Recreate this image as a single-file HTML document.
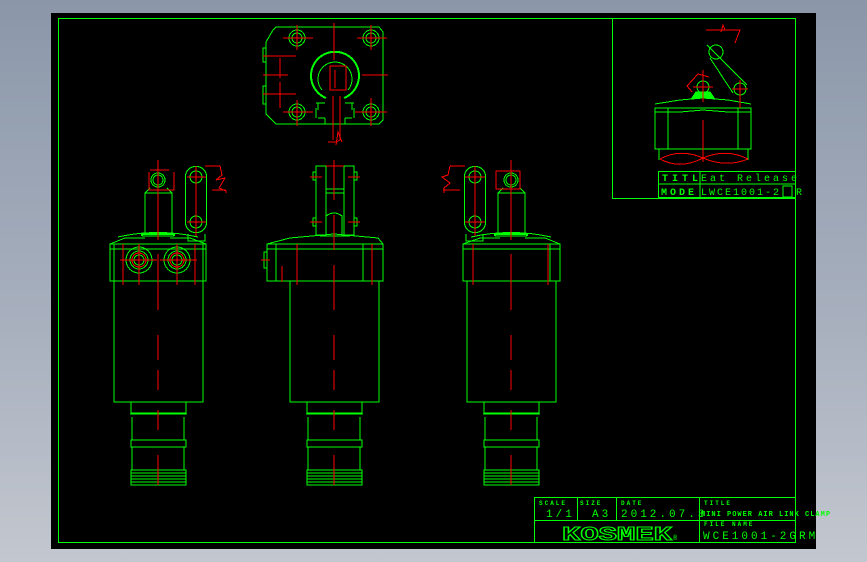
<!DOCTYPE html>
<html><head><meta charset="utf-8"><style>
html,body{margin:0;padding:0;width:867px;height:562px;overflow:hidden;background:linear-gradient(180deg,#8b97a9 0%,#a9b1bf 60%,#c3c7cf 100%);}
svg{position:absolute;left:0;top:0}
text{font-family:"Liberation Mono",monospace;fill:#00ff00}
</style></head><body>
<svg width="867" height="562" viewBox="0 0 867 562" xmlns="http://www.w3.org/2000/svg" shape-rendering="crispEdges">
<defs>
<g id="lower" fill="none" stroke="#00ff00" stroke-width="1">
  <rect x="-44" y="281" width="89" height="121"/>
  <path d="M-27 402V413H28V402M-28 414H29M-26 417V440H26V417M-27 440H28V447H-27ZM-26 447V470H26V447M-27 470H28V485H-27ZM-27 473H28M-27 476H28M-27 479H28M-27 482H28"/>
  <path d="M0 290V310M0 335V360M0 370V390M0 410V430M0 455V485" stroke="#ff0000"/>
</g>
<g id="rodtop" fill="none" stroke="#00ff00">
  <rect x="-13" y="193" width="27" height="41"/>
  <path d="M-16 236H16M-40 237Q0 228 40 237" />
  <path d="M-16 236V234H16V236" stroke-width="2"/>
  <circle cx="0" cy="180" r="7"/><circle cx="0" cy="180" r="5"/>
  <path d="M-13 193L-8 188M14 193L9 188"/>
</g>
</defs>
<rect x="51" y="13" width="765" height="536" fill="#000"/>
<rect x="58.5" y="18.5" width="737" height="524" fill="none" stroke="#00ff00"/>

<!-- top plan view -->
<g fill="none" stroke="#00ff00">
  <path d="M276 27H379L383 32V120L379 124H276L266 114V42L273 30Z"/>
  <path d="M266 48H263V62H266M266 86H263V104H266"/>
  <circle cx="297" cy="38" r="8"/><circle cx="297" cy="38" r="5"/>
  <circle cx="371" cy="38" r="8"/><circle cx="371" cy="38" r="5"/>
  <circle cx="297" cy="112" r="8"/><circle cx="297" cy="112" r="5"/>
  <circle cx="371" cy="112" r="8"/><circle cx="371" cy="112" r="5"/>
  <path d="M326 98A24 24 0 1 1 344 98" stroke-width="2"/>
  <path d="M322 90A17 17 0 1 1 348 90"/>
  <path d="M318 103V110M352 103V110M316 103H325M345 103H354M318 118H325M345 118H352M316 108V118M354 108V118M325 118V124H345V118"/>
</g>
<g fill="none" stroke="#ff0000">
  <path d="M334 23V60M280 58V78M263 56H296M280 82V108M263 94H296M263 75H288M362 75H388M283 38H313M357 38H387M297 25V50M371 25V50M283 112H313M355 112H387M297 100V126M371 98V126M330 66H346V90H330ZM335 70V88M333 96V140M340 96V140L336 142H328M342 142L338 132L336 145"/>
</g>

<!-- left view -->
<use href="#lower" x="158"/>
<g fill="none" stroke="#00ff00">
  <rect x="110" y="244" width="96" height="37"/>
  <path d="M110 244L125 238H145M170 238H190L206 244M110 249H206M114 244V281M203 244V281"/>
  <circle cx="139" cy="260" r="13"/><circle cx="139" cy="260" r="9"/><circle cx="139" cy="260" r="5"/>
  <circle cx="177" cy="260" r="13"/><circle cx="177" cy="260" r="9"/><circle cx="177" cy="260" r="5"/>
  <rect x="185.5" y="166.5" width="21" height="66" rx="10"/>
  <circle cx="196" cy="177" r="6"/><circle cx="196" cy="222" r="6"/>
  <path d="M188 234V241H205V234"/>
</g>
<use href="#rodtop" x="158"/>
<g fill="none" stroke="#ff0000">
  <path d="M158 160V240M158 254V290M120 260H157M160 260H197M139 244V285M177 244V285M196 166V236M187 177H206M187 222H206M123 244V285M195 244V285M150 170H169M149 172V190H174V172M205 166H220L222 175L216 180L225 178L219 188L226 191V193M212 190H226"/>
  <circle cx="139" cy="260" r="7"/><circle cx="177" cy="260" r="7"/>
</g>

<!-- middle view -->
<use href="#lower" x="334"/>
<g fill="none" stroke="#00ff00">
  <rect x="267" y="244" width="116" height="37"/>
  <path d="M267 244L290 238L334 234L378 238L383 244M267 249H383M276 244V281M363 244V281M267 252H264V268H267"/>
  <rect x="316" y="166" width="10" height="69"/><rect x="344" y="166" width="10" height="69"/>
  <rect x="313" y="172" width="3" height="8"/><rect x="354" y="172" width="3" height="8"/>
  <rect x="313" y="218" width="3" height="8"/><rect x="354" y="218" width="3" height="8"/>
  <path d="M326 189H344M326 193H344M326 236V216Q334 210 342 216V236M320 236H350"/>
</g>
<g fill="none" stroke="#ff0000">
  <path d="M334 160V200M334 215V250M334 265V290M310 177H322M348 177H360M310 222H322M348 222H360M326 166H344M297 244V285M372 244V285M282 266V282M261 260H270"/>
</g>

<!-- right view -->
<use href="#lower" x="511"/>
<g fill="none" stroke="#00ff00">
  <rect x="463" y="244" width="97" height="37"/>
  <path d="M463 244L480 238H500M525 238H545L560 244M463 249H560M473 244V281M550 244V281"/>
  <rect x="464.5" y="166.5" width="21" height="66" rx="10"/>
  <circle cx="475" cy="177" r="6"/><circle cx="475" cy="222" r="6"/>
  <path d="M466 234V241H483V234"/>
</g>
<use href="#rodtop" x="511"/>
<g fill="none" stroke="#ff0000">
  <path d="M511 160V240M511 254V290M475 166V236M465 177H485M465 222H485M473 244V285M548 244V285M496 171H520V189H496ZM450 166H465M450 166L448 175L442 177L450 183L444 188V193M443 190H460"/>
</g>

<!-- inset view -->
<rect x="612.5" y="18.5" width="183" height="180" fill="none" stroke="#00ff00"/>
<g fill="none" stroke="#00ff00">
  <rect x="655" y="108" width="96" height="41"/>
  <path d="M668 108V149M738 108V149M659 149V160M748 149V160M655 104L680 100L703 98L728 100L751 104M655 112H680L703 110L728 112H751"/>
  <path d="M692 98L696 92H710L714 98Z" fill="#00ff00"/>
  <circle cx="703" cy="87" r="6"/><circle cx="740" cy="89" r="6"/><circle cx="716" cy="52" r="7"/>
  <path d="M707 45L747 85M710 58L733 93"/>
</g>
<g fill="none" stroke="#ff0000">
  <path d="M703 70V102M693 87H713M740 80V108M732 89H748M703 120V162M660 159Q680 148 703 158Q726 168 748 159M660 159Q680 170 703 158Q726 148 748 159M706 30H740L735 43M725 30L723 25L721 32M709 77L698 74L687 86L692 92"/>
</g>
<g fill="none" stroke="#00ff00">
  <rect x="658.5" y="171.5" width="137" height="26"/>
  <path d="M658 184H796M700 171V198"/>
  <rect x="783" y="186" width="9" height="11"/>
</g>
<text x="662" y="181" font-size="10" font-weight="bold" letter-spacing="4">TITL</text>
<text x="701" y="181" font-size="10" letter-spacing="3">Eat Release</text>
<text x="661" y="195" font-size="10" font-weight="bold" letter-spacing="3">MODE</text>
<text x="701" y="195" font-size="10" letter-spacing="2">LWCE1001-2</text>
<text x="796" y="195" font-size="10">R</text>

<!-- title block -->
<g fill="none" stroke="#00ff00">
  <path d="M534.5 542V497.5H795.5M534 520.5H796M577.5 498V520M616.5 498V520M699.5 498V542"/>
</g>
<text x="539" y="505" font-size="6" font-weight="bold" letter-spacing="2">SCALE</text>
<text x="580" y="505" font-size="6" font-weight="bold" letter-spacing="2">SIZE</text>
<text x="621" y="505" font-size="6" font-weight="bold" letter-spacing="2">DATE</text>
<text x="704" y="505" font-size="6" font-weight="bold" letter-spacing="2">TITLE</text>
<text x="546" y="517" font-size="11" letter-spacing="3">1/1</text>
<text x="592" y="517" font-size="11" letter-spacing="3">A3</text>
<text x="621" y="517" font-size="11" letter-spacing="3">2012.07.3</text>
<text x="701" y="516" font-size="7" font-weight="bold" letter-spacing="1">MINI POWER AIR LINK CLAMP</text>
<text x="704" y="526" font-size="6" font-weight="bold" letter-spacing="2">FILE NAME</text>
<text x="703" y="539" font-size="11" letter-spacing="3">WCE1001-2GRM</text>
<text x="562" y="540" font-size="19" font-weight="bold" stroke="#00ff00" stroke-width="1" style="fill:none" textLength="110" lengthAdjust="spacingAndGlyphs">KOSMEK</text>
<text x="673" y="540" font-size="7">®</text>
</svg>
</body></html>
